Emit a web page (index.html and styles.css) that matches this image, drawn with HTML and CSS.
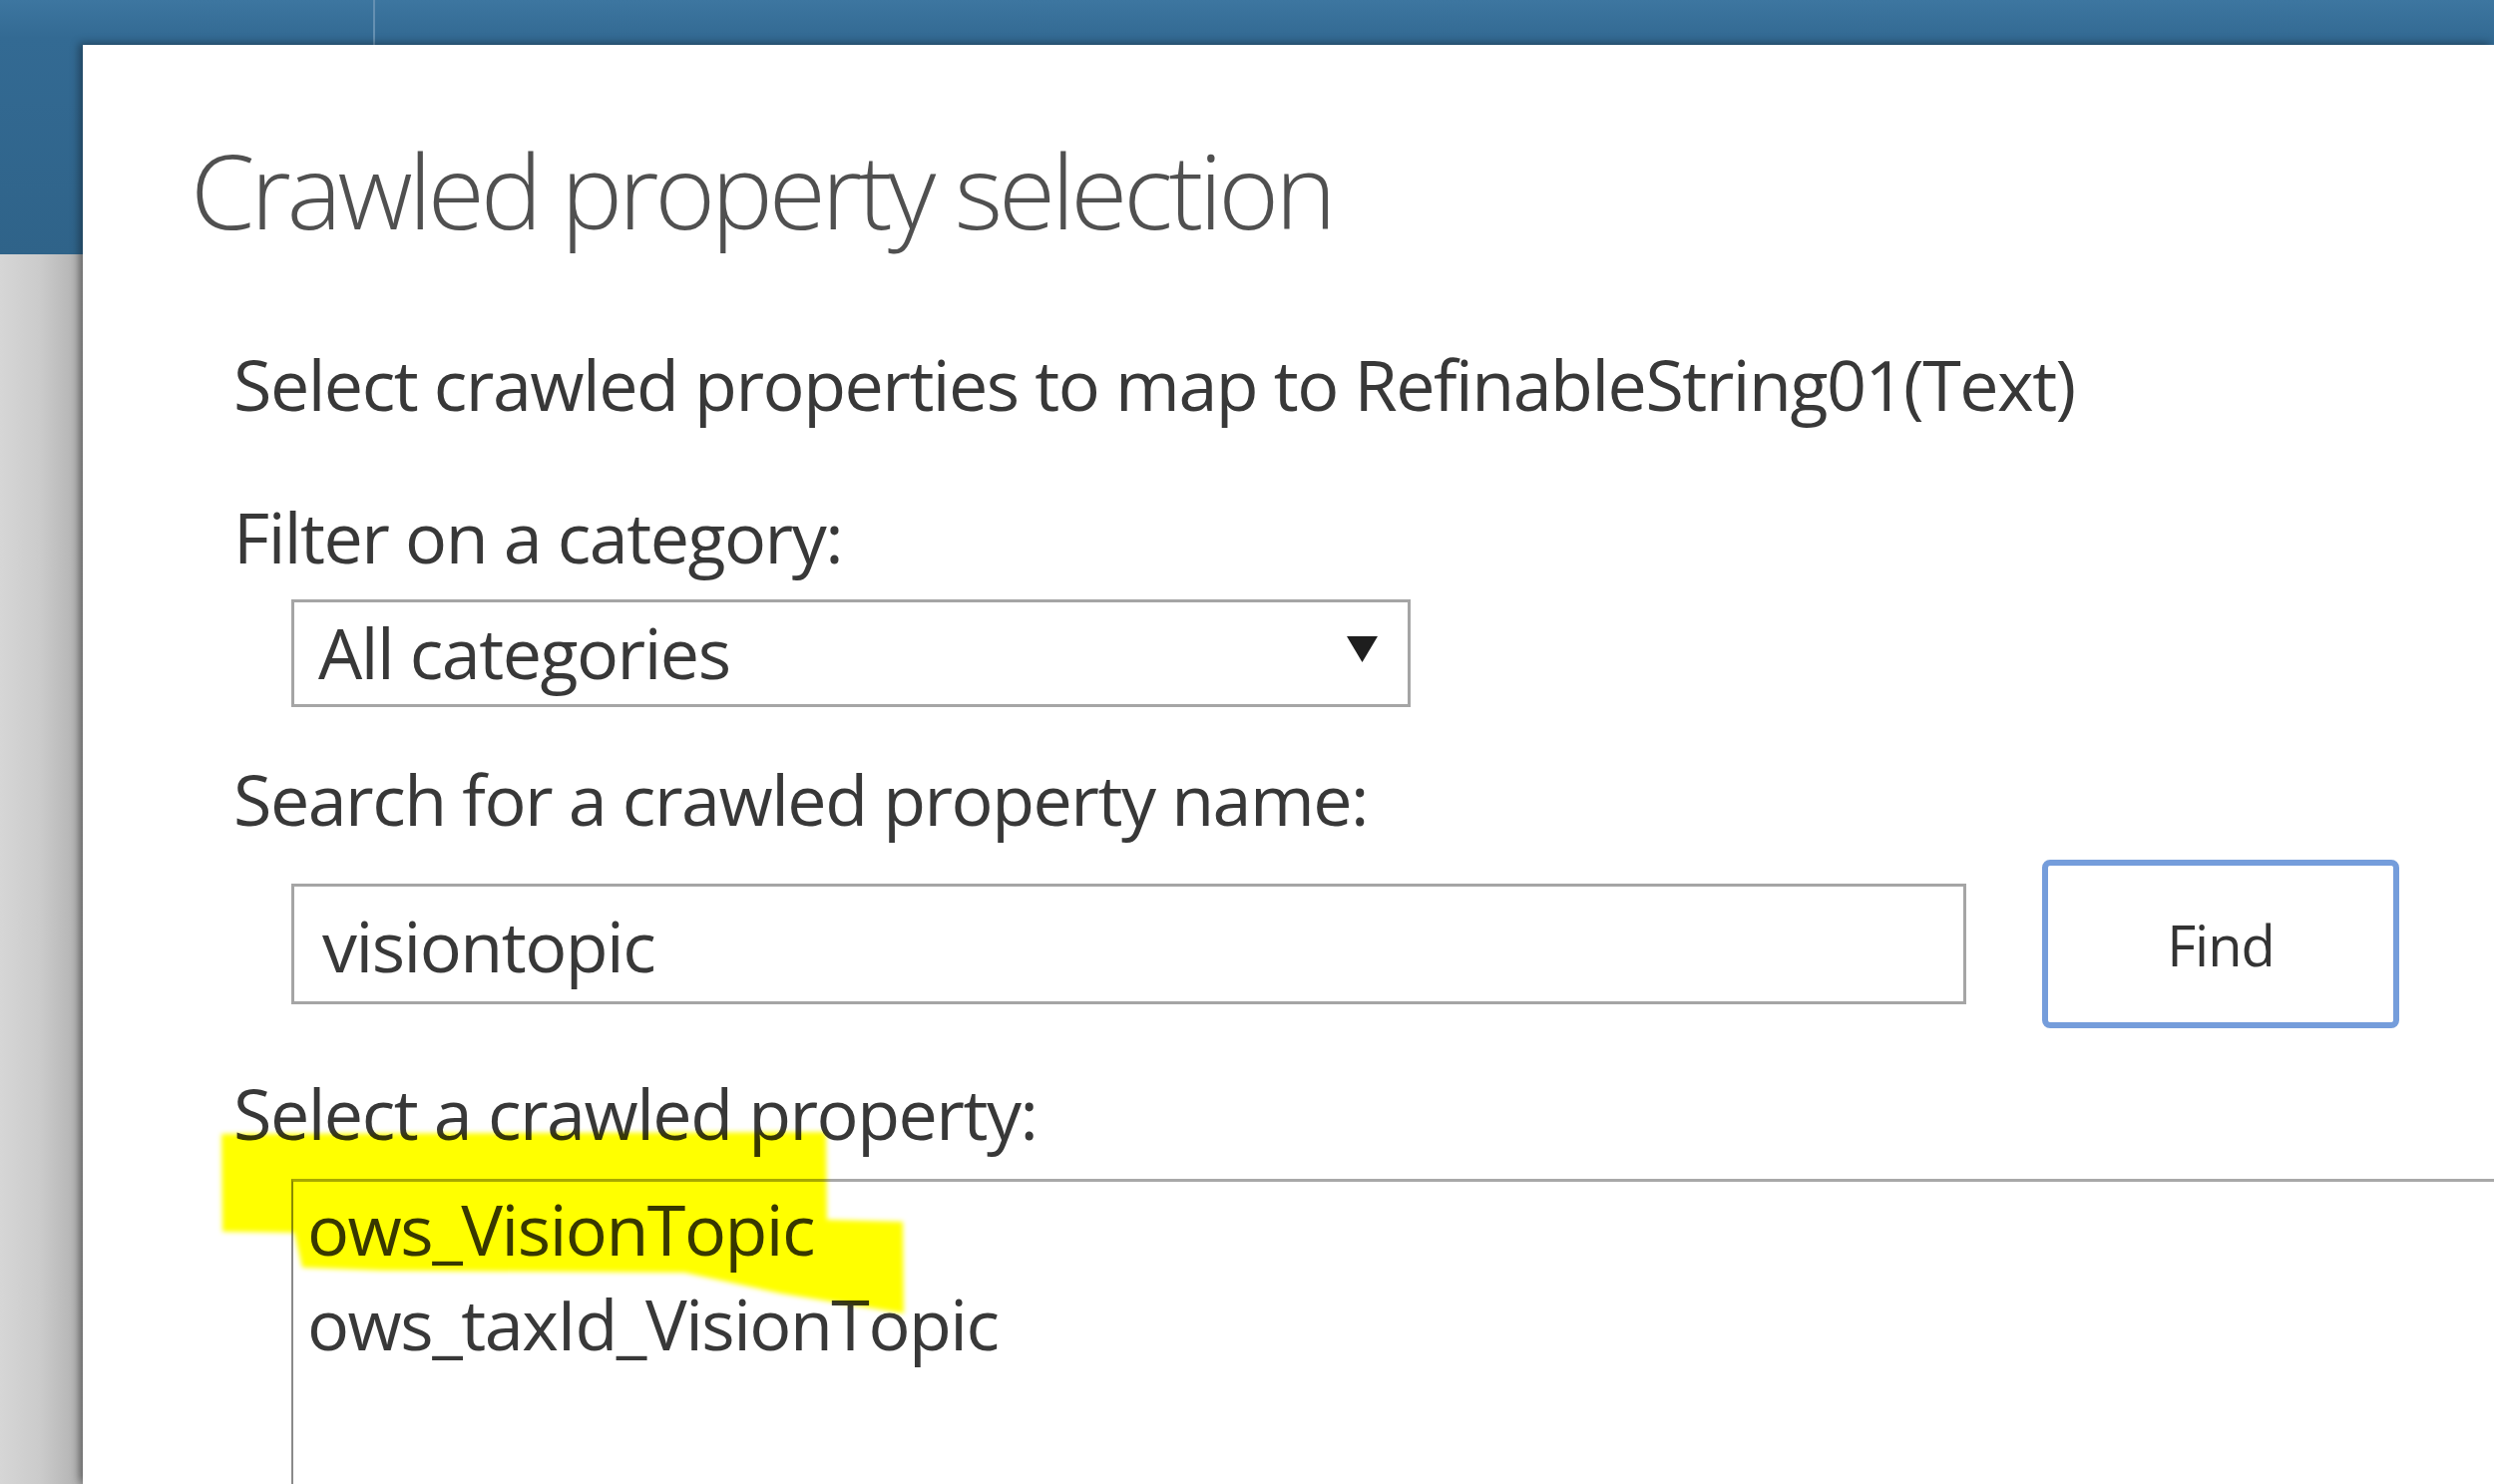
FILE: index.html
```html
<!DOCTYPE html>
<html lang="en">
<head>
<meta charset="utf-8">
<title>Crawled property selection</title>
<link rel="stylesheet" href="styles.css">
</head>
<body>
<div class="page">
  <div class="suitebar"><span class="divider"></span></div>
  <div class="workspace"></div>
  <div class="dialog">
    <h1 class="title">Crawled property selection</h1>
    <div class="body">
      <p class="intro">Select crawled properties to map to RefinableString01(Text)</p>
      <div class="label label-filter">Filter on a category:</div>
      <div class="select">
        <span class="select-text">All categories</span>
        <svg class="arrow" width="33" height="28" viewBox="0 0 33 28"><path d="M1 1 L32 1 L16.5 27 Z" fill="#1e1e1e"/></svg>
      </div>
      <div class="label label-search">Search for a crawled property name:</div>
      <div class="search-row">
        <div class="input">visiontopic</div>
        <button class="find" type="button">Find</button>
      </div>
      <div class="label label-select">Select a crawled property:</div>
      <div class="listbox">
        <div class="item">ows_VisionTopic</div>
        <div class="item">ows_taxId_VisionTopic</div>
      </div>
    </div>
    <svg class="highlight" width="700" height="200" viewBox="130 1080 700 200">
      <defs><filter id="soft" x="-5%" y="-10%" width="110%" height="120%"><feGaussianBlur stdDeviation="2.5"/></filter></defs>
      <path d="M139 1092 L745 1090 L746 1178 L822 1180 L823 1272 L700 1252 L603 1231 L300 1229 L220 1226 L212 1191 L140 1190 Z" fill="#ffff00" filter="url(#soft)"/>
    </svg>
  </div>
</div>
</body>
</html>
```

FILE: styles.css
```css
html, body {
  margin: 0;
  padding: 0;
  width: 2500px;
  height: 1488px;
  overflow: hidden;
  background: #c8c8c8;
}

.page {
  position: relative;
  width: 2500px;
  height: 1488px;
  display: flex;
  flex-direction: column;
  font-family: "Open Sans", "Noto Sans", "DejaVu Sans", sans-serif;
  font-variant-ligatures: none;
}

.suitebar {
  height: 255px;
  flex: none;
  position: relative;
  background: linear-gradient(180deg, #3d76a0 0%, #336a93 15%, #2f6389 100%);
}

.divider {
  position: absolute;
  left: 374px;
  top: 0;
  width: 2px;
  height: 45px;
  background: #6590b2;
}

.workspace {
  flex: 1;
  background: linear-gradient(90deg, #d6d6d6 0px, #cbcbcb 40px, #b4b4b4 76px, #a0a0a0 83px);
}

.dialog {
  position: absolute;
  left: 83px;
  top: 45px;
  right: 0;
  bottom: 0;
  background: #ffffff;
  box-shadow: -4px -2px 8px rgba(0, 0, 0, 0.35);
  padding-top: 80px;
  box-sizing: border-box;
  overflow: hidden;
}

.title {
  margin: 0 0 0 108px;
  font-size: 104px;
  line-height: 129.6px;
  font-weight: 300;
  color: #505050;
  letter-spacing: -4.2px;
}

.body {
  display: flex;
  flex-direction: column;
  align-items: flex-start;
  padding-left: 151px;
  color: #383838;
  font-size: 70px;
  line-height: 93.6px;
  letter-spacing: -1.5px;
}

.intro {
  margin: 84px 0 0 0;
}

.label-filter {
  margin-top: 60px;
}

.select {
  margin: 15px 0 0 58px;
  width: 1122px;
  height: 108px;
  box-sizing: border-box;
  border: 3px solid #a5a5a5;
  display: flex;
  align-items: flex-start;
  justify-content: space-between;
  padding: 0 29px 0 24px;
  line-height: 100px;
}

.arrow {
  margin-top: 33px;
}

.label-search {
  margin-top: 46px;
}

.search-row {
  margin: 14px 0 0 58px;
  display: flex;
  align-items: center;
  gap: 76px;
  height: 169px;
}

.input {
  width: 1679px;
  height: 121px;
  box-sizing: border-box;
  border: 3px solid #a5a5a5;
  padding-left: 28px;
  line-height: 118px;
}

.find {
  width: 358px;
  height: 169px;
  box-sizing: border-box;
  border: 6px solid #759ddb;
  border-radius: 8px;
  background: #ffffff;
  font-family: "Open Sans", "Noto Sans", sans-serif;
  font-size: 56px;
  letter-spacing: -1px;
  color: #333333;
  padding: 0;
}

.label-select {
  margin-top: 39px;
}

.listbox {
  margin: 18px 0 0 58px;
  width: 2400px;
  height: 600px;
  box-sizing: border-box;
  border-top: 3px solid #a8a8a8;
  border-left: 2px solid #8a8a8a;
  padding-left: 14px;
  padding-top: 0;
}

.item {
  line-height: 95px;
}

.highlight {
  position: absolute;
  left: 130px;
  top: 1080px;
  mix-blend-mode: multiply;
  pointer-events: none;
}
```
